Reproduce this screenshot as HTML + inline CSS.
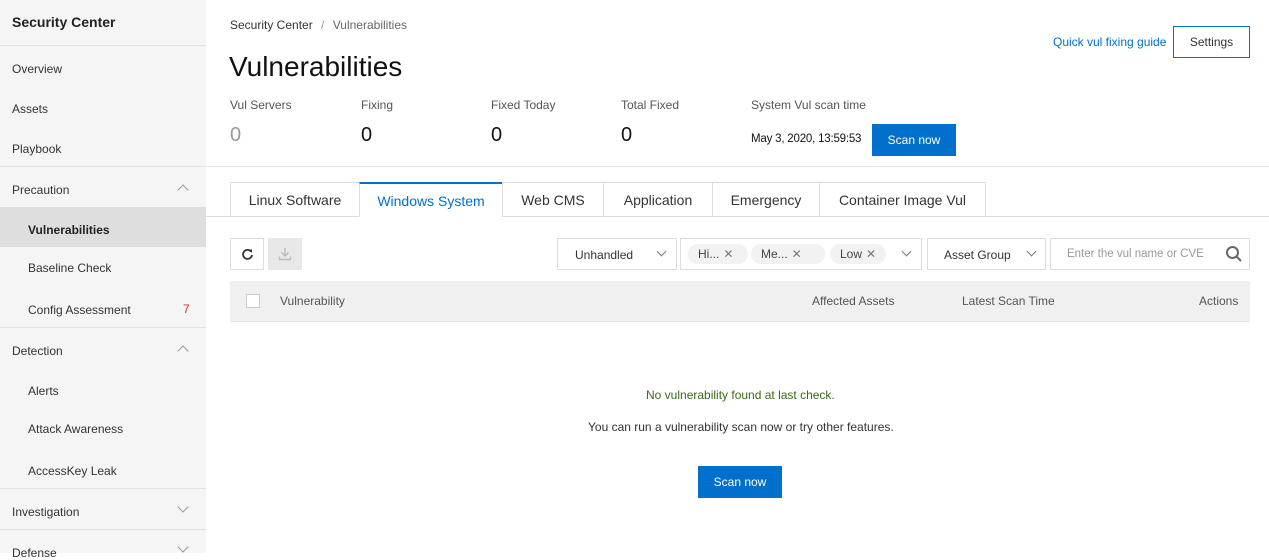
<!DOCTYPE html><html><head><style>
*{margin:0;padding:0;box-sizing:border-box}
body{width:1269px;height:553px;overflow:hidden;font-family:"Liberation Sans",sans-serif;font-size:12px;color:#333;background:#fff;position:relative}
.a{position:absolute;white-space:nowrap}
.sb{position:absolute;left:0;top:0;width:206px;height:553px;background:#f5f5f5}
.ln{position:absolute;left:0;width:206px;height:1px;background:#e3e3e3}
.chev{position:absolute;width:8px;height:8px;border-left:1.5px solid #999;border-top:1.5px solid #999}
.btn{position:absolute;background:#0070cc;color:#fff;text-align:center}
.box{position:absolute;border:1px solid #ddd;background:#fff}
.tag{position:absolute;background:#f2f2f2;border-radius:10px;height:20px;top:244px;line-height:20px;padding-left:10px;color:#444}
.tag i{font-style:normal;color:#777;margin-left:4px}
.dd{position:absolute;width:7px;height:7px;border-right:1.3px solid #777;border-bottom:1.3px solid #777;transform:rotate(45deg)}
</style></head><body>
<div class="sb">
<div class="a" style="left:12px;top:14px;font-size:14px;font-weight:bold;color:#222">Security Center</div>
<div class="ln" style="top:45px"></div>
<div class="a" style="left:12px;top:62px">Overview</div>
<div class="a" style="left:12px;top:102px">Assets</div>
<div class="a" style="left:12px;top:142px">Playbook</div>
<div class="ln" style="top:166px"></div>
<div class="a" style="left:12px;top:183px">Precaution</div>
<div class="chev" style="left:179px;top:186px;transform:rotate(45deg)"></div>
<div style="position:absolute;left:0;top:207px;width:206px;height:40px;background:#dedede"></div>
<div class="a" style="left:28px;top:223px;font-weight:bold;color:#222">Vulnerabilities</div>
<div class="a" style="left:28px;top:261px">Baseline Check</div>
<div class="a" style="left:28px;top:303px">Config Assessment</div>
<div class="a" style="left:183px;top:302px;color:#c33">7</div>
<div class="ln" style="top:327px"></div>
<div class="a" style="left:12px;top:344px">Detection</div>
<div class="chev" style="left:179px;top:347px;transform:rotate(45deg)"></div>
<div class="a" style="left:28px;top:384px">Alerts</div>
<div class="a" style="left:28px;top:422px">Attack Awareness</div>
<div class="a" style="left:28px;top:464px">AccessKey Leak</div>
<div class="ln" style="top:488px"></div>
<div class="a" style="left:12px;top:505px">Investigation</div>
<div class="chev" style="left:179px;top:503px;transform:rotate(225deg)"></div>
<div class="ln" style="top:529px"></div>
<div class="a" style="left:12px;top:546px">Defense</div>
<div class="chev" style="left:179px;top:543px;transform:rotate(225deg)"></div>
</div>
<div class="a" style="left:230px;top:18px;color:#333">Security Center <span style="color:#999;margin:0 5px">/</span> <span style="color:#666">Vulnerabilities</span></div>
<div class="a" style="left:229px;top:51px;font-size:28px;color:#111">Vulnerabilities</div>
<div class="a" style="left:1053px;top:35px;color:#0070cc">Quick vul fixing guide</div>
<div class="box" style="left:1173px;top:26px;width:77px;height:32px;border-color:#0070cc;text-align:center;line-height:30px">Settings</div>
<div class="a" style="left:230px;top:98px;color:#555">Vul Servers</div>
<div class="a" style="left:361px;top:98px;color:#555">Fixing</div>
<div class="a" style="left:491px;top:98px;color:#555">Fixed Today</div>
<div class="a" style="left:621px;top:98px;color:#555">Total Fixed</div>
<div class="a" style="left:751px;top:98px;color:#555">System Vul scan time</div>
<div class="a" style="left:230px;top:124px;font-size:20px;color:#999">0</div>
<div class="a" style="left:361px;top:124px;font-size:20px;color:#111">0</div>
<div class="a" style="left:491px;top:124px;font-size:20px;color:#111">0</div>
<div class="a" style="left:621px;top:124px;font-size:20px;color:#111">0</div>
<div class="a" style="left:751px;top:133px;color:#111;font-size:11.5px;letter-spacing:-0.2px">May 3, 2020, 13:59:53</div>
<div class="btn" style="left:872px;top:124px;width:84px;height:32px;line-height:32px">Scan now</div>
<div style="position:absolute;left:206px;top:166px;width:1063px;height:1px;background:#e8e8e8"></div>
<div style="position:absolute;left:206px;top:216px;width:1063px;height:1px;background:#ddd"></div>
<div class="box" style="left:230px;top:182px;width:130px;height:35px;text-align:center;line-height:34px;font-size:14px">Linux Software</div>
<div class="box" style="left:359px;top:182px;width:144px;height:35px;text-align:center;line-height:34px;font-size:14px;color:#0070cc;border-top:2px solid #0070cc;border-bottom-color:#fff">Windows System</div>
<div class="box" style="left:502px;top:182px;width:102px;height:35px;text-align:center;line-height:34px;font-size:14px">Web CMS</div>
<div class="box" style="left:603px;top:182px;width:110px;height:35px;text-align:center;line-height:34px;font-size:14px">Application</div>
<div class="box" style="left:712px;top:182px;width:108px;height:35px;text-align:center;line-height:34px;font-size:14px">Emergency</div>
<div class="box" style="left:819px;top:182px;width:167px;height:35px;text-align:center;line-height:34px;font-size:14px">Container Image Vul</div>
<div class="box" style="left:230px;top:238px;width:34px;height:32px"><svg class="a" style="left:10px;top:9px" width="13" height="13"><path d="M10 3.5A4.5 4.5 0 1 0 11 7" fill="none" stroke="#333" stroke-width="1.8"/><path d="M7.5 1.5L11 1.5L11 5Z" fill="#333"/></svg></div>
<div style="position:absolute;left:268px;top:238px;width:34px;height:32px;background:#e8e8e8"><svg class="a" style="left:10px;top:9px" width="14" height="14"><path d="M7 1v8M3.5 5.5L7 9l3.5-3.5M1.5 9.5v3h11v-3" fill="none" stroke="#bbb" stroke-width="1.4"/></svg></div>
<div class="box" style="left:557px;top:238px;width:120px;height:32px"><span class="a" style="left:17px;top:9px">Unhandled</span><div class="dd" style="left:100px;top:9px"></div></div>
<div class="box" style="left:680px;top:238px;width:242px;height:32px"><div class="dd" style="left:222px;top:9px"></div></div>
<div class="tag" style="left:688px;width:60px">Hi...<i>✕</i></div>
<div class="tag" style="left:751px;width:74px">Me...<i>✕</i></div>
<div class="tag" style="left:830px;width:56px">Low<i>✕</i></div>
<div class="box" style="left:927px;top:238px;width:119px;height:32px"><span class="a" style="left:16px;top:9px">Asset Group</span><div class="dd" style="left:100px;top:9px"></div></div>
<div class="box" style="left:1050px;top:238px;width:200px;height:32px"><span class="a" style="left:16px;top:9px;color:#999;font-size:11.5px">Enter the vul name or CVE</span><svg class="a" style="left:174px;top:6px" width="18" height="18"><circle cx="7.5" cy="7.5" r="5.5" fill="none" stroke="#666" stroke-width="2"/><line x1="11.5" y1="11.5" x2="16" y2="16" stroke="#666" stroke-width="2"/></svg></div>
<div style="position:absolute;left:230px;top:281px;width:1020px;height:41px;background:#f0f0f0;border-bottom:1px solid #e3e3e3"></div>
<div style="position:absolute;left:246px;top:294px;width:14px;height:14px;border:1px solid #ccc;background:#fff"></div>
<div class="a" style="left:280px;top:294px;color:#555">Vulnerability</div>
<div class="a" style="left:812px;top:294px;color:#555">Affected Assets</div>
<div class="a" style="left:962px;top:294px;color:#555">Latest Scan Time</div>
<div class="a" style="left:1199px;top:294px;color:#555">Actions</div>
<div class="a" style="left:646px;top:388px;color:#3a6a1a">No vulnerability found at last check.</div>
<div class="a" style="left:588px;top:420px;color:#333">You can run a vulnerability scan now or try other features.</div>
<div class="btn" style="left:698px;top:466px;width:84px;height:32px;line-height:32px">Scan now</div>
</body></html>
